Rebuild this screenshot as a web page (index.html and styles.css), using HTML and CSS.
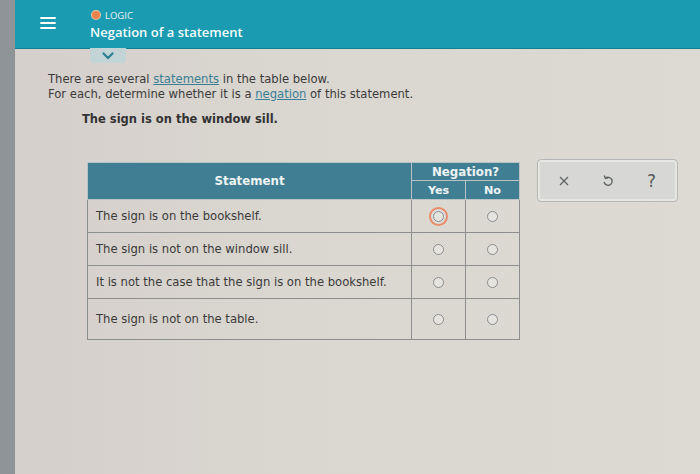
FILE: index.html
```html
<!DOCTYPE html>
<html>
<head>
<meta charset="utf-8">
<link rel="stylesheet" href="styles.css">
</head>
<body>
<div class="side"></div>
<div class="main">
  <header class="topbar">
    <div class="menu">
      <svg width="16" height="14" viewBox="0 0 16 14"><path d="M1 2h14M1 7h14M1 12h14" stroke="#fff" stroke-width="1.8" stroke-linecap="round"/></svg>
    </div>
    <div class="titles">
      <div class="topic"><span class="dot"></span>LOGIC</div>
      <div class="title">Negation of a statement</div>
    </div>
  </header>
  <div class="tab">
    <svg width="12" height="8" viewBox="0 0 12 8"><path d="M1.5 1.5l4.5 4.5 4.5-4.5" fill="none" stroke="#2b7f95" stroke-width="2.2" stroke-linecap="round" stroke-linejoin="round"/></svg>
  </div>
  <div class="content">
    <p class="intro">There are several <a class="link">statements</a> in the table below.<br>For each, determine whether it is a <a class="link">negation</a> of this statement.</p>
    <p class="given">The sign is on the window sill.</p>
    <div class="work">
      <table class="grid">
        <thead>
          <tr><th rowspan="2" class="stmt-h">Statement</th><th colspan="2" class="neg-h">Negation?</th></tr>
          <tr><th class="yn">Yes</th><th class="yn">No</th></tr>
        </thead>
        <tbody>
          <tr><td class="stmt">The sign is on the bookshelf.</td><td class="rc"><span class="radio focus"></span></td><td class="rc"><span class="radio"></span></td></tr>
          <tr><td class="stmt">The sign is not on the window sill.</td><td class="rc"><span class="radio"></span></td><td class="rc"><span class="radio"></span></td></tr>
          <tr><td class="stmt">It is not the case that the sign is on the bookshelf.</td><td class="rc"><span class="radio"></span></td><td class="rc"><span class="radio"></span></td></tr>
          <tr><td class="stmt">The sign is not on the table.</td><td class="rc"><span class="radio"></span></td><td class="rc"><span class="radio"></span></td></tr>
        </tbody>
      </table>
      <div class="tools">
        <svg width="12" height="12" viewBox="0 0 12 12"><path d="M2 2l8 8M10 2l-8 8" stroke="#5f6365" stroke-width="1.3"/></svg>
        <svg width="12" height="13" viewBox="0 0 12 13"><path d="M3.4 4.4A4 4 0 1 1 2.2 7.8" fill="none" stroke="#5f6365" stroke-width="1.4"/><path d="M2.2 1.4l1.3 3.1 3-0.9" fill="none" stroke="#5f6365" stroke-width="1.4"/></svg>
        <span class="q">?</span>
      </div>
    </div>
  </div>
</div>
</body>
</html>
```
FILE: styles.css
```css
html, body { margin: 0; padding: 0; }
body {
  display: flex;
  width: 700px;
  height: 474px;
  overflow: hidden;
  background: linear-gradient(90deg, #d5cfcb 0%, #dad7d0 45%, #dcdad3 100%);
  font-family: "DejaVu Sans", Verdana, sans-serif;
  color: #3a3a3a;
}
.side { width: 15px; background: #8e9498; flex: none; }
.main { flex: 1; display: flex; flex-direction: column; }
.topbar {
  height: 48px;
  background: #1b9bb1;
  display: flex;
  align-items: center;
  box-sizing: border-box;
  padding-left: 25px;
  box-shadow: 0 1px 0 #137e92;
}
.menu { width: 16px; height: 14px; margin-right: 34px; margin-top: -2px; }
.menu svg { display: block; }
.titles { display: flex; flex-direction: column; gap: 1px; margin-top: 1px; }
.topic {
  font-family: "Open Sans", sans-serif;
  font-size: 9.5px;
  color: #e4f4f7;
  display: flex;
  align-items: center;
  gap: 5px;
  padding-left: 2px;
}
.dot {
  width: 8px; height: 8px; border-radius: 50%;
  background: #e8834a;
  box-shadow: 0 0 0 1px #f0c3a0;
}
.title {
  font-family: "Open Sans", sans-serif;
  font-weight: 600;
  font-size: 13px;
  color: #f4fbfc;
}
.tab {
  margin-left: 75px;
  width: 36px;
  height: 15px;
  background: #c3d4d6;
  border-radius: 0 0 4px 4px;
  display: flex;
  align-items: center;
  justify-content: center;
}
.content { padding-left: 33px; }
.intro {
  margin: 9px 0 0 0;
  font-size: 11.6px;
  line-height: 15px;
  color: #3b3b3b;
}
.link { color: #3a7f95; text-decoration: underline; }
.given {
  margin: 10px 0 0 34px;
  font-size: 11.5px;
  font-weight: bold;
  color: #333;
}
.work { display: flex; align-items: flex-start; margin-top: 36px; margin-left: 39px; gap: 17px; }
.grid {
  border-collapse: collapse;
  width: 433px;
  font-size: 11.6px;
}
.grid th {
  background: #407f93;
  color: #eef3f4;
  font-weight: bold;
  border: 1px solid #b8c3c6;
  padding: 0;
}
.stmt-h { width: 324px; height: 36px; font-size: 11.8px; }
.neg-h { height: 17px; font-size: 11.8px; }
.yn { height: 18px; width: 53px; font-size: 11.2px; }
.grid td {
  border: 1px solid #8d8f8f;
  height: 32px;
  padding: 0;
}
.grid tbody tr:last-child td { height: 40px; }
.stmt { padding-left: 8px !important; color: #3a3a3a; }
.rc { text-align: center; }
.radio {
  display: inline-block;
  width: 9px; height: 9px;
  border-radius: 50%;
  border: 1px solid #8a8c8d;
  background: #e6e4df;
  vertical-align: middle;
}
.radio.focus {
  box-shadow: 0 0 0 2px #ddd, 0 0 0 4px #e88c6a;
  border-radius: 50%;
}
.tools {
  width: 141px;
  height: 43px;
  margin-top: -3px;
  border: 1px solid #b5b7b6;
  border-radius: 4px;
  background: #d7d8d5;
  box-shadow: inset 0 0 0 2px #e6e6e3;
  display: flex;
  align-items: center;
  justify-content: space-between;
  padding: 0 21px 0 20px;
  box-sizing: border-box;
}
.q { font-family: "DejaVu Sans", sans-serif; font-size: 17px; color: #55595b; }
```
